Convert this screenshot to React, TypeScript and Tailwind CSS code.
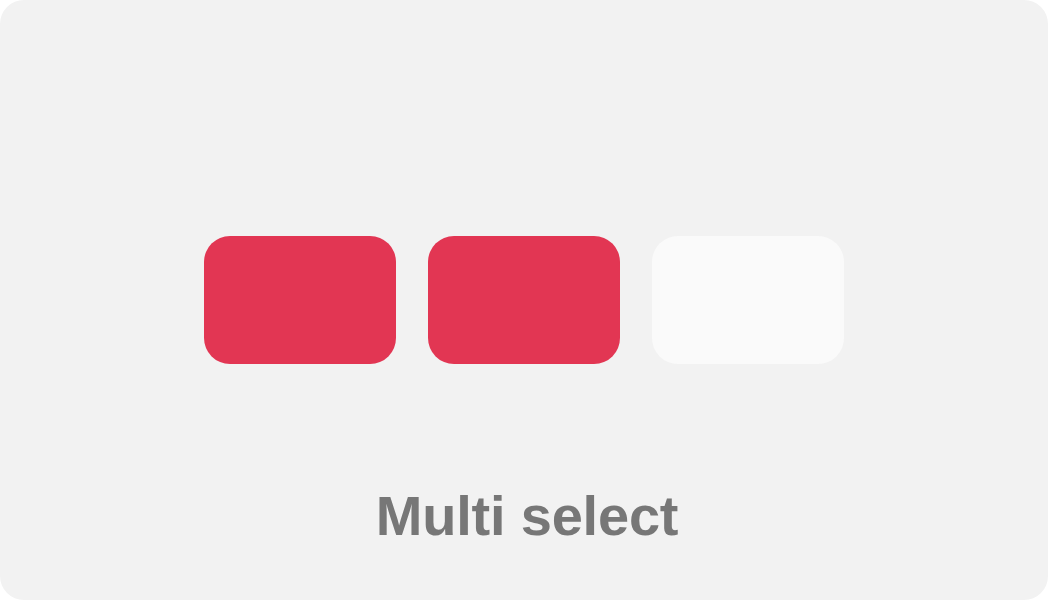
export default function App() {
  return (
    <div className="w-[1048px] h-[600px] bg-white">
      <div className="w-full h-full rounded-[24px] bg-[#f2f2f2] flex flex-col items-center pt-[236px]">
        <div className="flex gap-[32px]">
          <div className="w-[192px] h-[128px] rounded-[26px] bg-[#e23653]" />
          <div className="w-[192px] h-[128px] rounded-[26px] bg-[#e23653]" />
          <div className="w-[192px] h-[128px] rounded-[26px] bg-[#fafafa]" />
        </div>
        <div
          className="mt-[120px] pl-[6px] text-[56px] leading-[64px] font-bold text-[#777777] tracking-[-0.2px]"
          style={{ fontFamily: '"Liberation Sans", Arial, sans-serif' }}
        >
          Multi select
        </div>
      </div>
    </div>
  );
}
